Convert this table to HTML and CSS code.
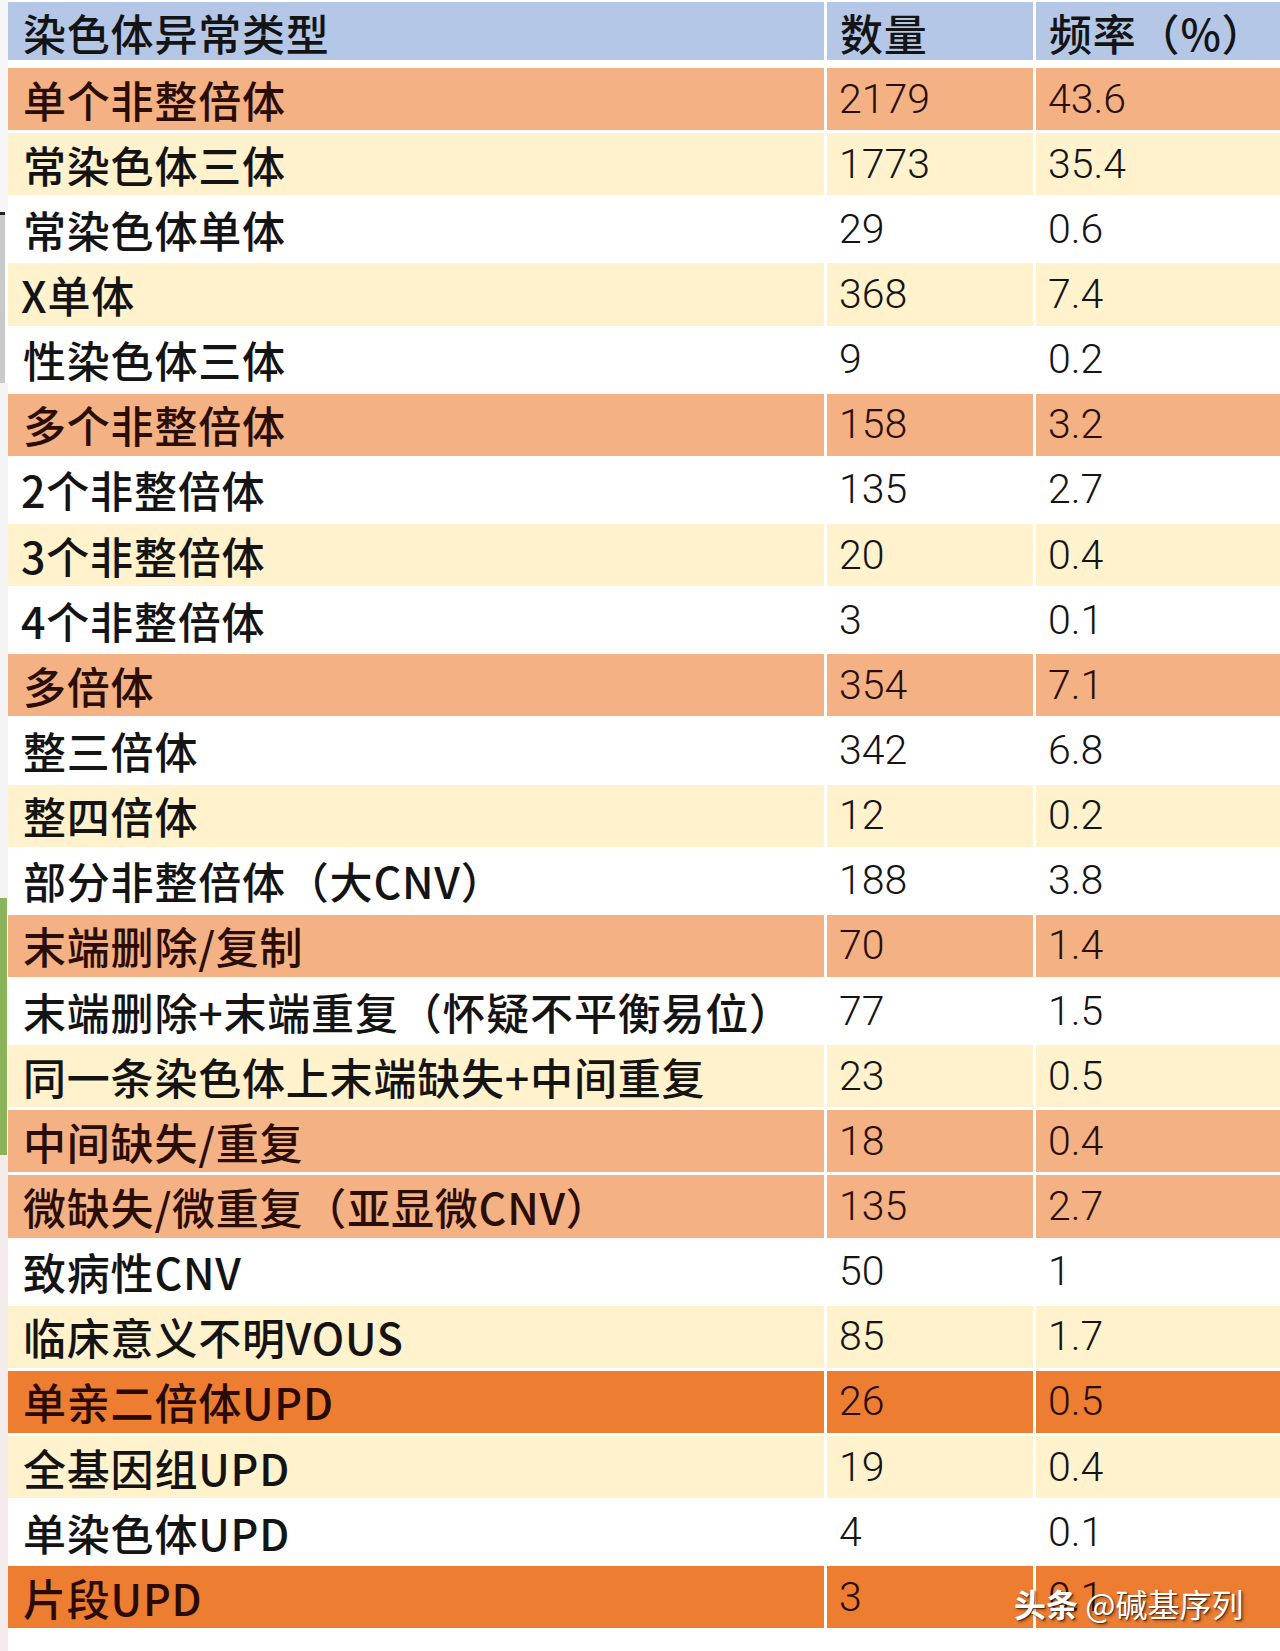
FILE: index.html
```html
<!DOCTYPE html>
<html lang="zh-CN">
<head>
<meta charset="utf-8">
<title>染色体异常类型</title>
<link rel="stylesheet" href="styles.css">
</head>
<body>
<div class="page">
  <div class="edge">
    <div class="edge-seg edge-white1"></div>
    <div class="edge-seg edge-grey"></div>
    <div class="edge-seg edge-white2"></div>
    <div class="edge-seg edge-green"></div>
    <div class="edge-seg edge-pale"></div>
  </div>
  <div class="sheet">
    <div class="row head">
      <div class="cell name">染色体异常类型</div>
      <div class="cell">数量</div>
      <div class="cell">频率（%）</div>
    </div>
    <div class="rows">
      <div class="row orange"><div class="cell name">单个非整倍体</div><div class="cell num">2179</div><div class="cell num">43.6</div></div>
      <div class="row yellow"><div class="cell name">常染色体三体</div><div class="cell num">1773</div><div class="cell num">35.4</div></div>
      <div class="row white"><div class="cell name">常染色体单体</div><div class="cell num">29</div><div class="cell num">0.6</div></div>
      <div class="row yellow"><div class="cell name lat">X单体</div><div class="cell num">368</div><div class="cell num">7.4</div></div>
      <div class="row white"><div class="cell name">性染色体三体</div><div class="cell num">9</div><div class="cell num">0.2</div></div>
      <div class="row orange"><div class="cell name">多个非整倍体</div><div class="cell num">158</div><div class="cell num">3.2</div></div>
      <div class="row white"><div class="cell name lat">2个非整倍体</div><div class="cell num">135</div><div class="cell num">2.7</div></div>
      <div class="row yellow"><div class="cell name lat">3个非整倍体</div><div class="cell num">20</div><div class="cell num">0.4</div></div>
      <div class="row white"><div class="cell name lat">4个非整倍体</div><div class="cell num">3</div><div class="cell num">0.1</div></div>
      <div class="row orange"><div class="cell name">多倍体</div><div class="cell num">354</div><div class="cell num">7.1</div></div>
      <div class="row white"><div class="cell name">整三倍体</div><div class="cell num">342</div><div class="cell num">6.8</div></div>
      <div class="row yellow"><div class="cell name">整四倍体</div><div class="cell num">12</div><div class="cell num">0.2</div></div>
      <div class="row white"><div class="cell name">部分非整倍体（大CNV）</div><div class="cell num">188</div><div class="cell num">3.8</div></div>
      <div class="row orange"><div class="cell name">末端删除/复制</div><div class="cell num">70</div><div class="cell num">1.4</div></div>
      <div class="row white"><div class="cell name">末端删除+末端重复（怀疑不平衡易位）</div><div class="cell num">77</div><div class="cell num">1.5</div></div>
      <div class="row yellow"><div class="cell name">同一条染色体上末端缺失+中间重复</div><div class="cell num">23</div><div class="cell num">0.5</div></div>
      <div class="row orange"><div class="cell name">中间缺失/重复</div><div class="cell num">18</div><div class="cell num">0.4</div></div>
      <div class="row orange"><div class="cell name">微缺失/微重复（亚显微CNV）</div><div class="cell num">135</div><div class="cell num">2.7</div></div>
      <div class="row white"><div class="cell name">致病性CNV</div><div class="cell num">50</div><div class="cell num">1</div></div>
      <div class="row yellow"><div class="cell name">临床意义不明VOUS</div><div class="cell num">85</div><div class="cell num">1.7</div></div>
      <div class="row dark"><div class="cell name">单亲二倍体UPD</div><div class="cell num">26</div><div class="cell num">0.5</div></div>
      <div class="row yellow"><div class="cell name">全基因组UPD</div><div class="cell num">19</div><div class="cell num">0.4</div></div>
      <div class="row white"><div class="cell name">单染色体UPD</div><div class="cell num">4</div><div class="cell num">0.1</div></div>
      <div class="row dark"><div class="cell name">片段UPD</div><div class="cell num">3</div><div class="cell num">0.1</div></div>
    </div>
  </div>
  <div class="watermark"><b>头条</b> @碱基序列</div>
</div>
</body>
</html>
```

FILE: styles.css
```css
html, body {
  margin: 0;
  padding: 0;
  background: #ffffff;
}

.page {
  position: relative;
  width: 1280px;
  height: 1651px;
  display: flex;
  overflow: hidden;
  font-family: "Noto Sans CJK SC", "Noto Sans", sans-serif;
  color: #141414;
}

.edge {
  width: 8px;
  flex: none;
  display: flex;
  flex-direction: column;
}

.edge-seg { flex: none; }
.edge-white1 { height: 212px; background: #f6f6f6; }
.edge-grey { height: 168px; width: 5px; background: #c9c9cb; border-top: 3px solid #222; }
.edge-white2 { height: 515px; background: #f4f4f5; }
.edge-green { height: 257px; width: 7px; background: #8bb35a; }
.edge-pale { flex: 1; background: #f3ecea; }

.sheet {
  flex: 1;
  padding-top: 2px;
}

.row {
  display: grid;
  grid-template-columns: 816px 206px 244px;
  grid-template-rows: 100%;
  column-gap: 3px;
  height: 62px;
}

.rows .row {
  height: 62.15px;
}

.cell {
  display: flex;
  align-items: center;
  padding-left: 13px;
  line-height: 1;
  white-space: nowrap;
  min-height: 0;
}

.name {
  padding-left: 15px;
  font-weight: 500;
  font-size: 43px;
  letter-spacing: 0.8px;
}

.name.lat { padding-left: 13px; }

.num {
  padding-left: 12px;
  font-family: Roboto, "Open Sans", sans-serif;
  font-weight: 300;
  font-size: 41px;
}

.head {
  height: 58px;
}

.head .cell {
  background: #b4c7e7;
  font-weight: 500;
  font-size: 43px;
  letter-spacing: 0.8px;
  padding-top: 3px;
}

.head .cell + .cell { padding-left: 13px; }

.rows {
  margin-top: 8px;
  display: flex;
  flex-direction: column;
  gap: 3px;
}

.orange .cell { background: #f4b183; color: #2a0d06; }
.yellow .cell { background: #fff2cc; }
.white .cell { background: #ffffff; }
.dark .cell { background: #ed7d31; color: #2a0a04; }

.watermark {
  position: absolute;
  left: 1014px;
  top: 1580px;
  font-size: 32px;
  color: #ffffff;
  text-shadow: 1px 1px 1px rgba(0, 0, 0, 0.55), 2px 2px 3px rgba(0, 0, 0, 0.35);
  white-space: nowrap;
}

.watermark b { font-weight: 700; }
```
